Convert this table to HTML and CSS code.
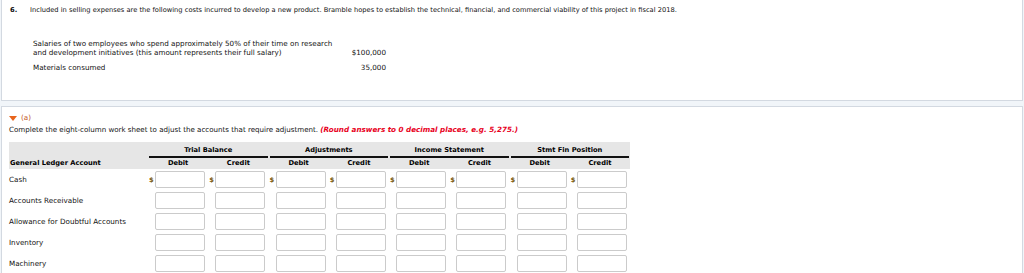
FILE: index.html
```html
<!DOCTYPE html>
<html>
<head>
<meta charset="utf-8">
<link rel="stylesheet" href="styles.css">
</head>
<body>
<div class="panel question">
  <div class="qline"><span class="qnum">6.</span><span class="qtext">Included in selling expenses are the following costs incurred to develop a new product. Bramble hopes to establish the technical, financial, and commercial viability of this project in fiscal 2018.</span></div>
  <div class="costs">
    <div class="crow">
      <div class="cdesc">Salaries of two employees who spend approximately 50% of their time on research<br>and development initiatives (this amount represents their full salary)</div>
      <div class="camt">$100,000</div>
    </div>
    <div class="crow">
      <div class="cdesc">Materials consumed</div>
      <div class="camt">35,000</div>
    </div>
  </div>
</div>
<div class="panel part">
  <div class="parthead"><span class="tri"></span><span class="plabel">(a)</span></div>
  <div class="instr">Complete the eight-column work sheet to adjust the accounts that require adjustment. <em class="hint">(Round answers to 0 decimal places, e.g. 5,275.)</em></div>
  <table class="ws">
    <colgroup>
      <col class="c-acct">
      <col class="c-num"><col class="c-num"><col class="c-num"><col class="c-num">
      <col class="c-num"><col class="c-num"><col class="c-num"><col class="c-num">
    </colgroup>
    <thead>
      <tr class="grp">
        <th class="acct" rowspan="2">General Ledger Account</th>
        <th colspan="2"><div class="gl">Trial Balance</div></th>
        <th colspan="2"><div class="gl">Adjustments</div></th>
        <th colspan="2"><div class="gl">Income Statement</div></th>
        <th colspan="2"><div class="gl">Stmt Fin Position</div></th>
      </tr>
      <tr class="sub">
        <th>Debit</th><th>Credit</th><th>Debit</th><th>Credit</th>
        <th>Debit</th><th>Credit</th><th>Debit</th><th>Credit</th>
      </tr>
    </thead>
    <tbody>
      <tr>
        <td class="lbl">Cash</td>
        <td><span class="cur">$</span><span class="box"></span></td>
        <td><span class="cur">$</span><span class="box"></span></td>
        <td><span class="cur">$</span><span class="box"></span></td>
        <td><span class="cur">$</span><span class="box"></span></td>
        <td><span class="cur">$</span><span class="box"></span></td>
        <td><span class="cur">$</span><span class="box"></span></td>
        <td><span class="cur">$</span><span class="box"></span></td>
        <td><span class="cur">$</span><span class="box"></span></td>
      </tr>
      <tr>
        <td class="lbl">Accounts Receivable</td>
        <td><span class="cur"></span><span class="box"></span></td>
        <td><span class="cur"></span><span class="box"></span></td>
        <td><span class="cur"></span><span class="box"></span></td>
        <td><span class="cur"></span><span class="box"></span></td>
        <td><span class="cur"></span><span class="box"></span></td>
        <td><span class="cur"></span><span class="box"></span></td>
        <td><span class="cur"></span><span class="box"></span></td>
        <td><span class="cur"></span><span class="box"></span></td>
      </tr>
      <tr>
        <td class="lbl">Allowance for Doubtful Accounts</td>
        <td><span class="cur"></span><span class="box"></span></td>
        <td><span class="cur"></span><span class="box"></span></td>
        <td><span class="cur"></span><span class="box"></span></td>
        <td><span class="cur"></span><span class="box"></span></td>
        <td><span class="cur"></span><span class="box"></span></td>
        <td><span class="cur"></span><span class="box"></span></td>
        <td><span class="cur"></span><span class="box"></span></td>
        <td><span class="cur"></span><span class="box"></span></td>
      </tr>
      <tr>
        <td class="lbl">Inventory</td>
        <td><span class="cur"></span><span class="box"></span></td>
        <td><span class="cur"></span><span class="box"></span></td>
        <td><span class="cur"></span><span class="box"></span></td>
        <td><span class="cur"></span><span class="box"></span></td>
        <td><span class="cur"></span><span class="box"></span></td>
        <td><span class="cur"></span><span class="box"></span></td>
        <td><span class="cur"></span><span class="box"></span></td>
        <td><span class="cur"></span><span class="box"></span></td>
      </tr>
      <tr>
        <td class="lbl">Machinery</td>
        <td><span class="cur"></span><span class="box"></span></td>
        <td><span class="cur"></span><span class="box"></span></td>
        <td><span class="cur"></span><span class="box"></span></td>
        <td><span class="cur"></span><span class="box"></span></td>
        <td><span class="cur"></span><span class="box"></span></td>
        <td><span class="cur"></span><span class="box"></span></td>
        <td><span class="cur"></span><span class="box"></span></td>
        <td><span class="cur"></span><span class="box"></span></td>
      </tr>
    </tbody>
  </table>
</div>
</body>
</html>
```

FILE: styles.css
```css
html, body {
  margin: 0;
  padding: 0;
}
body {
  background: #f1f5f9;
  font-family: "DejaVu Sans", Verdana, sans-serif;
  font-size: 6.7px;
  color: #111;
  padding: 0 1px;
}
.panel {
  background: #fff;
  border: 1px solid #d3d9e1;
}
.question {
  border-top: none;
  height: 101px;
  box-sizing: border-box;
  padding: 5px 0 0 0;
}
.qline {
  display: flex;
  line-height: 10px;
}
.qnum {
  width: 28px;
  padding-left: 8px;
  box-sizing: border-box;
  font-weight: bold;
}
.costs {
  margin: 24px 0 0 31px;
  width: 353px;
  font-size: 7.2px;
}
.crow {
  display: flex;
  justify-content: space-between;
  align-items: flex-end;
  line-height: 9px;
  margin-bottom: 6px;
}
.camt {
  text-align: right;
}
.part {
  margin-top: 5px;
  height: 170px;
  padding: 6px 0 0 7px;
  box-sizing: border-box;
}
.parthead {
  display: flex;
  align-items: center;
  line-height: 10px;
  height: 10px;
}
.tri {
  width: 0;
  height: 0;
  border-left: 4px solid transparent;
  border-right: 4px solid transparent;
  border-top: 5px solid #e8641c;
  margin-right: 4px;
}
.plabel {
  color: #c4581e;
  font-size: 7.2px;
}
.instr {
  line-height: 10px;
  margin-top: 2px;
  font-size: 7.1px;
}
.hint {
  color: #e8001c;
  font-weight: bold;
  font-style: italic;
  font-size: 7.2px;
}
.ws {
  border-collapse: collapse;
  table-layout: fixed;
  width: 621px;
  margin-top: 7px;
}
.c-acct { width: 139px; }
.c-num { width: 60.25px; }
.ws thead tr {
  background: #e6e6e6;
}
.ws th {
  font-weight: bold;
  color: #000;
  padding: 0;
  text-align: center;
}
.ws th.acct {
  text-align: left;
  vertical-align: bottom;
  padding-bottom: 2px;
}
.grp th {
  padding: 2px 1px 0 1px;
  height: 14px;
  vertical-align: bottom;
}
.gl {
  border-bottom: 2px solid #111;
  line-height: 11px;
}
.sub th {
  height: 11px;
  line-height: 11px;
}
.ws td {
  padding: 0;
  height: 21px;
  vertical-align: middle;
}
.ws td.lbl {
  white-space: nowrap;
  font-size: 7.2px;
  line-height: 9px;
}
.ws td:not(.lbl) {
  font-size: 0;
}
.cur {
  display: inline-block;
  width: 7px;
  padding-left: 1px;
  box-sizing: border-box;
  font-size: 6.7px;
  font-weight: bold;
  color: #7a5a10;
  vertical-align: middle;
}
.box {
  display: inline-block;
  width: 50px;
  height: 17px;
  box-sizing: border-box;
  border: 1px solid #cbcbcb;
  border-radius: 2px;
  background: #fff;
  vertical-align: middle;
}
```
